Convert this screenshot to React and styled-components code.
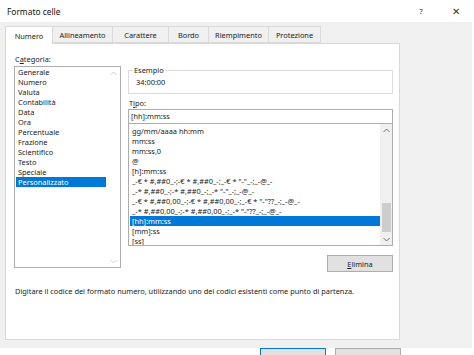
import React from "react";
import styled, { createGlobalStyle } from "styled-components";

const Global = createGlobalStyle`
  html, body { margin: 0; padding: 0; background: #fff; }
  body { font-family: "Noto Sans", "Open Sans", sans-serif; color: #1a1a1a; }
  * { box-sizing: border-box; }
`;

const FS = "7.4px";

const Window = styled.div`
  width: 474px;
  height: 355px;
  overflow: hidden;
  display: flex;
  flex-direction: column;
  background: #fff;
`;

const TitleBar = styled.div`
  height: 22px;
  flex: none;
  display: flex;
  align-items: center;
  padding-left: 7px;
  font-size: 8.4px;
  color: #111;
`;

const Title = styled.span`
  flex: 1;
`;

const TitleBtn = styled.span`
  width: ${p => p.$w}px;
  text-align: center;
  font-size: ${p => p.$size}px;
  color: #333;
`;

const Body = styled.div`
  width: 472px;
  height: 326px;
  flex: none;
  background: #f0f0f0;
  padding: 4px 0 0 5px;
  display: flex;
  flex-direction: column;
`;

const Tabs = styled.div`
  display: flex;
  height: 17px;
  padding-left: 1px;
  position: relative;
  z-index: 1;
`;

const Tab = styled.div`
  width: ${p => p.$w}px;
  height: ${p => (p.$active ? 18 : 17)}px;
  display: flex;
  align-items: center;
  justify-content: center;
  font-size: ${FS};
  color: #222;
  background: ${p => (p.$active ? "#fff" : "#f0f0f0")};
  border: 1px solid #d9d9d9;
  border-bottom: ${p => (p.$active ? "none" : "1px solid #d9d9d9")};
  margin-left: -1px;
`;

const Panel = styled.div`
  width: 395px;
  height: 297px;
  background: #fff;
  border: 1px solid #d9d9d9;
  padding: 10px 6px 0 8px;
  display: flex;
  flex-direction: column;
`;

const Columns = styled.div`
  display: grid;
  grid-template-columns: 107px 265px;
  column-gap: 7px;
`;

const Col = styled.div`
  display: flex;
  flex-direction: column;
`;

const Label = styled.div`
  font-size: ${FS};
  line-height: 10px;
  height: ${p => p.$h || 12}px;
  margin-top: ${p => p.$mt || 0}px;
  padding-left: 1px;
  color: #222;
`;

const U = styled.span`
  text-decoration: underline;
  text-underline-offset: 1px;
`;

const ListBox = styled.div`
  height: ${p => p.$h}px;
  border: 1px solid #adadad;
  border-top: ${p => (p.$noTop ? "none" : "1px solid #adadad")};
  display: flex;
  background: #fff;
`;

const Items = styled.div`
  flex: 1;
  padding: ${p => p.$pt}px 0 0 1px;
  overflow: hidden;
`;

const Item = styled.div`
  height: 10px;
  line-height: 10px;
  font-size: ${FS};
  white-space: nowrap;
  overflow: hidden;
  padding-left: 2px;
  background: ${p => (p.$sel ? "#0078d7" : "transparent")};
  color: ${p => (p.$sel ? "#fff" : "#1a1a1a")};
`;

const ScrollBar = styled.div`
  width: ${p => p.$w}px;
  display: flex;
  flex-direction: column;
  align-items: center;
  background: ${p => p.$track};
`;

const Arrow = styled.div`
  height: 12px;
  display: flex;
  align-items: center;
  justify-content: center;
  flex: none;
`;

const Track = styled.div`
  flex: 1;
  width: 100%;
  display: flex;
  flex-direction: column;
  align-items: center;
`;

const Thumb = styled.div`
  width: 9px;
  background: #cdcdcd;
  height: ${p => p.$h}px;
  margin-top: ${p => p.$top}px;
`;

const Group = styled.fieldset`
  margin: 12px 0 0 0;
  height: 28px;
  border: 1px solid #dcdcdc;
  padding: 0 0 0 7px;
  min-width: 0;
`;

const Legend = styled.legend`
  font-size: ${FS};
  line-height: 8px;
  padding: 0 1px;
  margin-left: -3px;
  color: #222;
`;

const Sample = styled.div`
  font-size: ${FS};
  line-height: 10px;
  margin-top: 3px;
  color: #222;
`;

const Input = styled.div`
  height: 15px;
  border: 1px solid #adadad;
  font-size: ${FS};
  line-height: 13px;
  padding-left: 2px;
  color: #1a1a1a;
`;

const BtnRow = styled.div`
  display: flex;
  justify-content: flex-end;
  margin-top: 9px;
`;

const Button = styled.div`
  width: 66px;
  height: ${p => p.$h || 17}px;
  background: #e1e1e1;
  border: 1px solid ${p => (p.$primary ? "#0078d7" : "#adadad")};
  font-size: ${FS};
  line-height: 10px;
  display: flex;
  align-items: ${p => p.$align || "center"};
  justify-content: center;
  color: #222;
  flex: none;
`;

const Desc = styled.div`
  font-size: ${FS};
  line-height: 10px;
  margin-top: 14px;
  padding-left: 1px;
  color: #222;
`;

const Footer = styled.div`
  flex: 1;
  display: flex;
  gap: 9px;
  padding-left: 260px;
  overflow: hidden;
  background: #fff;
`;

const Chevron = ({ up, color = "#a0a0a0" }) => (
  <svg width="7" height="5" viewBox="0 0 7 5">
    <path
      d={up ? "M0.5 4 L3.5 1 L6.5 4" : "M0.5 1 L3.5 4 L6.5 1"}
      fill="none"
      stroke={color}
      strokeWidth="0.9"
    />
  </svg>
);

const categories = [
  "Generale", "Numero", "Valuta", "Contabilità", "Data", "Ora",
  "Percentuale", "Frazione", "Scientifico", "Testo", "Speciale", "Personalizzato",
];

const formats = [
  "gg/mm/aaaa hh:mm",
  "mm:ss",
  "mm:ss,0",
  "@",
  "[h]:mm:ss",
  '_-€ * #,##0_-;-€ * #,##0_-;_-€ * "-"_-;_-@_-',
  '_-* #,##0_-;-* #,##0_-;_-* "-"_-;_-@_-',
  '_-€ * #,##0,00_-;-€ * #,##0,00_-;_-€ * "-"??_-;_-@_-',
  '_-* #,##0,00_-;-* #,##0,00_-;_-* "-"??_-;_-@_-',
  "[hh]:mm:ss",
  "[mm]:ss",
  "[ss]",
];

const tabs = [
  ["Numero", 48],
  ["Allineamento", 61],
  ["Carattere", 57],
  ["Bordo", 41],
  ["Riempimento", 61],
  ["Protezione", 53],
];

export default function App() {
  return (
    <>
      <Global />
      <Window>
        <TitleBar>
          <Title>Formato celle</Title>
          <TitleBtn $w={34} $size={7.4}>?</TitleBtn>
          <TitleBtn $w={36} $size={10}>✕</TitleBtn>
        </TitleBar>
        <Body>
          <Tabs>
            {tabs.map(([t, w], i) => (
              <Tab key={t} $w={w} $active={i === 0}>{t}</Tab>
            ))}
          </Tabs>
          <Panel>
            <Columns>
              <Col>
                <Label>C<U>a</U>tegoria:</Label>
                <ListBox $h={202}>
                  <Items $pt={0}>
                    {categories.map((c, i) => (
                      <Item key={c} $sel={i === categories.length - 1}>{c}</Item>
                    ))}
                  </Items>
                  <ScrollBar $w={14} $track="#fff">
                    <Arrow><Chevron up color="#c8c8c8" /></Arrow>
                    <Track />
                    <Arrow><Chevron color="#c8c8c8" /></Arrow>
                  </ScrollBar>
                </ListBox>
              </Col>
              <Col>
                <Group>
                  <Legend>Esempio</Legend>
                  <Sample>34:00:00</Sample>
                </Group>
                <Label $h={11} $mt={4}>T<U>i</U>po:</Label>
                <Input>[hh]:mm:ss</Input>
                <ListBox $h={122} $noTop>
                  <Items $pt={2}>
                    {formats.map((f, i) => (
                      <Item key={f + i} $sel={i === 9}>{f}</Item>
                    ))}
                  </Items>
                  <ScrollBar $w={12} $track="#f0f0f0">
                    <Arrow><Chevron up color="#606060" /></Arrow>
                    <Track>
                      <Thumb $top={67} $h={29} />
                    </Track>
                    <Arrow><Chevron color="#606060" /></Arrow>
                  </ScrollBar>
                </ListBox>
                <BtnRow>
                  <Button><U>E</U>limina</Button>
                </BtnRow>
              </Col>
            </Columns>
            <Desc>
              Digitare il codice del formato numero, utilizzando uno dei codici esistenti come punto di partenza.
            </Desc>
          </Panel>
        </Body>
        <Footer>
          <Button $primary $h={18} $align="flex-end">OK</Button>
          <Button $h={18} $align="flex-end">Annulla</Button>
        </Footer>
      </Window>
    </>
  );
}
